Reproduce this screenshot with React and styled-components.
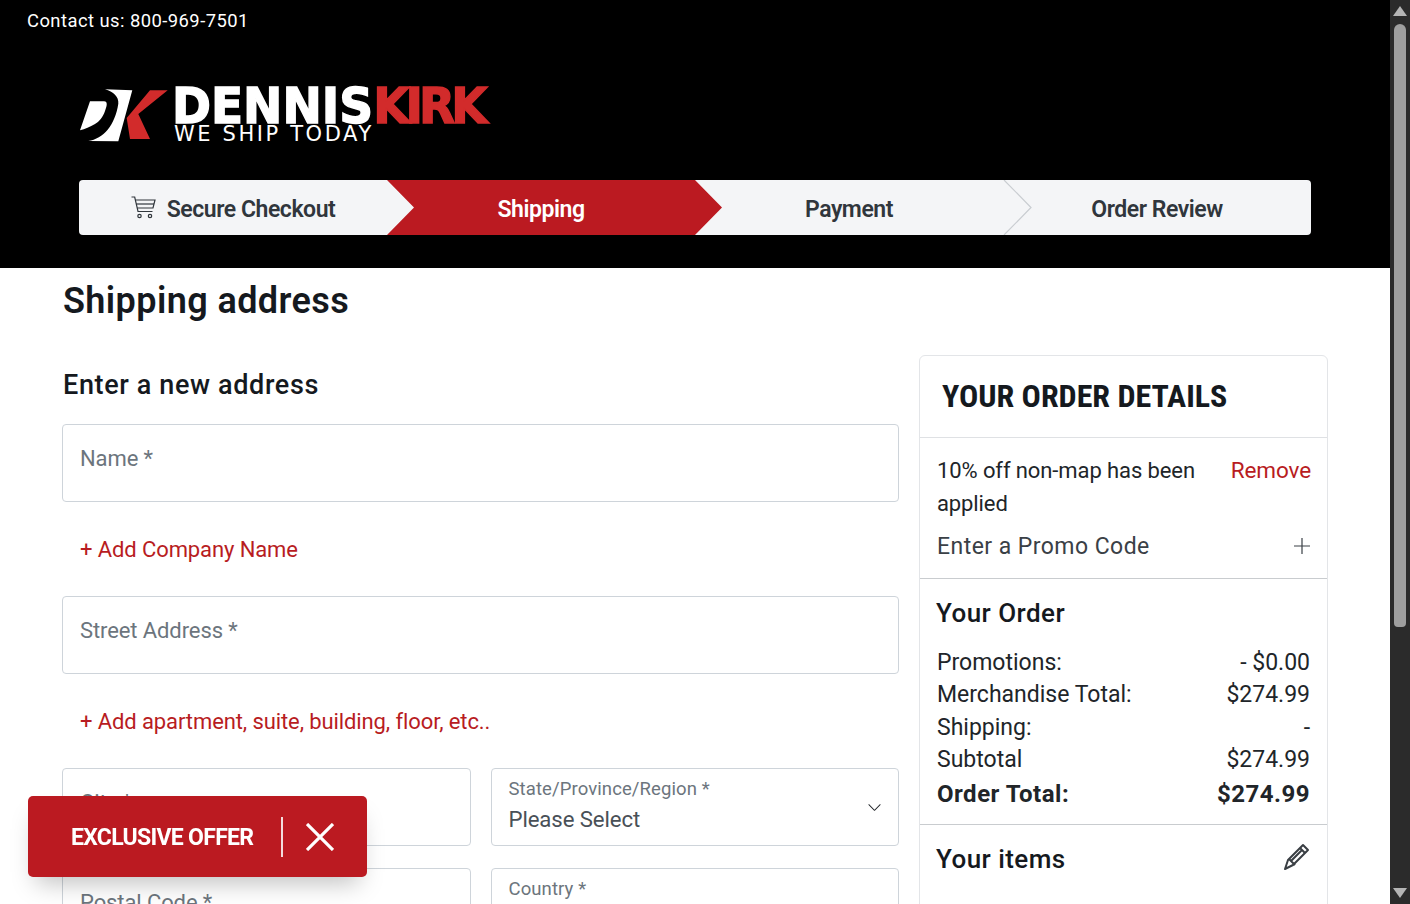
import React from 'react';
import styled, { createGlobalStyle } from 'styled-components';
import { BsChevronDown } from 'react-icons/bs';

const GlobalStyle = createGlobalStyle`
  html, body {
    margin: 0;
    height: 100%;
    overflow: hidden;
    background: #fff;
    font-family: Roboto, "Liberation Sans", sans-serif;
  }
`;

const Shell = styled.div`
  display: flex;
  height: 904px;
  overflow: hidden;
`;

const Page = styled.div`
  width: 1390px;
  flex: none;
`;

const Rail = styled.div`
  width: 20px;
  height: 904px;
  background: #2b2b2b;
  display: flex;
  flex-direction: column;
  align-items: center;
  justify-content: space-between;
  padding: 6px 0;
  box-sizing: border-box;
`;

const RailArrow = styled.div`
  width: 0;
  height: 0;
  border-left: 7px solid transparent;
  border-right: 7px solid transparent;
  ${(p) => (p.$down ? 'border-top: 10px solid #b4b4b4;' : 'border-bottom: 10px solid #b4b4b4;')}
`;

const RailThumb = styled.div`
  width: 12px;
  height: 603px;
  margin-top: 8px;
  margin-bottom: auto;
  background: #9f9f9f;
  border-radius: 6px 6px 4px 4px;
`;

const Header = styled.header`
  background: #000;
  height: 268px;
  padding-top: 9px;
  box-sizing: border-box;
`;

const Contact = styled.div`
  color: #fff;
  font-size: 18.4px;
  letter-spacing: 0.45px;
  line-height: 24px;
  padding-left: 27px;
`;

const LogoRow = styled.div`
  display: flex;
  align-items: flex-start;
  margin: 55px 0 0 79px;
  height: 92px;
`;

const LogoWords = styled.div`
  margin-left: 3px;
  width: 320px;
`;

const LogoName = styled.div`
  display: flex;
  font-family: "DejaVu Sans", Roboto, sans-serif;
  font-weight: 700;
  font-size: 47px;
  line-height: 36px;
  height: 36px;
  transform: scaleY(1.06);
  -webkit-text-stroke: 1.4px currentColor;
`;

const LogoPart = styled.span`
  color: ${(p) => p.$color};
  letter-spacing: ${(p) => p.$spacing}px;
`;

const LogoTag = styled.div`
  color: #fff;
  font-family: "DejaVu Sans", Roboto, sans-serif;
  font-size: 21px;
  line-height: 18px;
  letter-spacing: 2.6px;
  margin: 1px 0 0 2px;
  white-space: nowrap;
`;

const Steps = styled.nav`
  display: grid;
  grid-template-columns: repeat(4, 308px);
  width: 1232px;
  height: 55px;
  margin-left: 79px;
  background: #f4f5f7;
  border-radius: 4px;
`;

const Step = styled.div`
  position: relative;
  display: flex;
  align-items: center;
  justify-content: center;
  gap: 11px;
  box-sizing: border-box;
  padding-top: 3px;
  font-size: 23px;
  font-weight: 600;
  letter-spacing: -0.45px;
  color: ${(p) => (p.$active ? '#fff' : '#30363c')};
  background: ${(p) => (p.$active ? '#bb1a21' : 'transparent')};
  clip-path: ${(p) =>
    p.$active
      ? 'polygon(0 0, 308px 0, 335px 50%, 308px 100%, 0 100%, 27px 50%)'
      : 'none'};
  ${(p) => (p.$active ? 'width: 335px; padding-right: 27px; z-index: 1;' : '')}
`;

const StepDivider = styled.svg`
  position: absolute;
  left: 0;
  top: 0;
`;

const CartGlyph = styled.svg`
  margin-top: -3px;
`;

const Main = styled.main`
  padding: 0 0 0 62px;
`;

const Title = styled.h1`
  margin: 0 0 0 1px;
  color: #15191e;
  font-size: 36px;
  font-weight: 600;
  letter-spacing: 0.4px;
  line-height: 66px;
  height: 87px;
`;

const Columns = styled.div`
  display: grid;
  grid-template-columns: 837px 409px;
  gap: 20px;
`;

const FormColumn = styled.section``;

const FormTitle = styled.h2`
  margin: 0 0 0 1px;
  color: #15191e;
  font-size: 27px;
  font-weight: 500;
  letter-spacing: 0.63px;
  line-height: 60px;
  height: 69px;
`;

const Field = styled.div`
  box-sizing: border-box;
  height: 78px;
  border: 1px solid #ced4da;
  border-radius: 4px;
  padding: 17px 17px;
  color: #6c757d;
  font-size: 22px;
  letter-spacing: -0.1px;
  line-height: 33px;
  background: #fff;
  position: relative;
`;

const SmallLabel = styled.div`
  font-size: 18.5px;
  letter-spacing: 0.1px;
  line-height: 24px;
  margin-top: -9px;
  color: #6c757d;
`;

const FieldValue = styled.div`
  color: #495057;
  font-size: 22.2px;
  line-height: 35px;
  margin-top: 1px;
`;

const FieldArrow = styled(BsChevronDown)`
  position: absolute;
  right: 16px;
  top: 31px;
  font-size: 15px;
  color: #212529;
`;

const AddLink = styled.div`
  color: #b81c22;
  font-size: 22px;
  letter-spacing: -0.1px;
  line-height: 33px;
  padding: 31px 18px 30px;
`;

const FieldGrid = styled.div`
  display: grid;
  grid-template-columns: 1fr 1fr;
  gap: 22px 20px;
`;

const Card = styled.aside`
  border: 1px solid #e3e5e8;
  border-radius: 6px;
  height: 700px;
`;

const CardHead = styled.div`
  height: 82px;
  box-sizing: border-box;
  padding: 20px 22px;
  border-bottom: 1px solid #dfe1e4;
  font-family: "Roboto Condensed", Roboto, sans-serif;
  font-stretch: condensed;
  font-size: 32px;
  line-height: 40px;
  font-weight: 700;
  color: #15191e;
`;

const Promo = styled.div`
  height: 141px;
  box-sizing: border-box;
  padding: 16px 16px 0 17px;
  border-bottom: 1px solid #c9cccf;
  font-size: 22px;
  letter-spacing: -0.1px;
  line-height: 33px;
  color: #212529;
`;

const PromoRow = styled.div`
  display: flex;
  justify-content: space-between;
  gap: 20px;
`;

const RemoveLink = styled.span`
  color: #b81c22;
  font-size: 22.5px;
`;

const PromoEntry = styled(PromoRow)`
  margin-top: 10px;
  color: #3a4046;
  align-items: center;
  font-size: 23px;
  letter-spacing: 0.45px;
`;

const PlusGlyph = styled.svg`
  margin-top: -2px;
`;

const Section = styled.div`
  padding: 16px 17px 0 16px;
  border-bottom: 1px solid ${(p) => (p.$plain ? 'transparent' : '#c9cccf')};
  height: ${(p) => p.$h}px;
  box-sizing: border-box;
`;

const SectionHead = styled.div`
  display: flex;
  justify-content: space-between;
  align-items: center;
  font-size: 26px;
  font-weight: 500;
  letter-spacing: 0.45px;
  line-height: 36px;
  color: #15191e;
`;

const PencilGlyph = styled.svg`
  margin-top: -4px;
`;

const Totals = styled.dl`
  margin: 16px 0 0 1px;
`;

const TotalRow = styled.div`
  display: flex;
  justify-content: space-between;
  font-size: ${(p) => (p.$strong ? '24px' : '23px')};
  font-weight: ${(p) => (p.$strong ? 700 : 400)};
  letter-spacing: ${(p) => (p.$strong ? '0.5px' : '0')};
  line-height: ${(p) => (p.$strong ? '34px' : '32.4px')};
  color: #212529;
`;

const TotalLabel = styled.dt``;
const TotalValue = styled.dd`
  margin: 0;
`;

const Offer = styled.div`
  position: fixed;
  left: 28px;
  top: 796px;
  width: 339px;
  height: 81px;
  box-sizing: border-box;
  background: #bb1a21;
  border-radius: 5px;
  box-shadow: 0 14px 24px -8px rgba(0, 0, 0, 0.25);
  display: flex;
  align-items: center;
  padding-left: 43px;
  color: #fff;
  z-index: 5;
`;

const OfferText = styled.span`
  font-size: 23px;
  font-weight: 700;
  letter-spacing: -0.7px;
  line-height: 30px;
  padding-top: 2px;
  width: 210px;
`;

const OfferRule = styled.span`
  width: 2px;
  height: 40px;
  background: #f4dcdd;
`;

const OfferClose = styled.svg`
  margin-left: 23px;
`;

const DkMark = () => (
  <svg width="90" height="54" viewBox="0 0 90 54">
    <path d="M26 1.3 L53.3 2.3 L39.3 53.3 L9.3 53 C24.3 50.7 36 37.3 39.3 15.7 C40 9 34.3 3.3 26 1.3Z" fill="#fff" />
    <path d="M11 13.3 H25 C29 13.3 28 18 26 23 C24 29 20 34 16 36 C11 39 6 41 1 42.3Z" fill="#fff" />
    <path d="M71 2.3 H88.7 L59.3 26 L71 51 H51 L47.7 30Z" fill="#d22b2b" />
  </svg>
);

const CartIcon = () => (
  <CartGlyph width="25" height="23" viewBox="0 0 25 23" fill="none" stroke="#30363c" strokeWidth="1.2">
    <path d="M0.5 1h3.2l3.3 14.5h14.5" />
    <path d="M4.4 4H24l-2 8H6.2" />
    <path d="M5.2 8H23" />
    <circle cx="8.5" cy="20" r="1.7" />
    <circle cx="19" cy="20" r="1.7" />
  </CartGlyph>
);

const PencilIcon = () => (
  <PencilGlyph width="28" height="30" viewBox="0 0 28 30" fill="none" stroke="#3a3f44" strokeWidth="2" strokeLinejoin="round">
    <path d="M21 3l5 5-15 15-8 4 3-9z" />
    <path d="M18 6l5 5M7 17l6 6M9 19L20 8" />
  </PencilGlyph>
);

const App = () => {
  return (
    <>
      <GlobalStyle />
      <Shell>
        <Page>
          <Header>
            <Contact>Contact us: 800-969-7501</Contact>
            <LogoRow>
              <DkMark />
              <LogoWords>
                <LogoName>
                  <LogoPart $color="#fff" $spacing={0}>DENNIS</LogoPart>
                  <LogoPart $color="#d22b2b" $spacing={-4}>KIRK</LogoPart>
                </LogoName>
                <LogoTag>WE SHIP TODAY</LogoTag>
              </LogoWords>
            </LogoRow>
            <Steps>
              <Step>
                <CartIcon />
                Secure Checkout
              </Step>
              <Step $active>Shipping</Step>
              <Step>Payment</Step>
              <Step>
                <StepDivider width="30" height="55" viewBox="0 0 30 55" fill="none" stroke="#c9cdd1" strokeWidth="1.2">
                  <path d="M1 0l27 27.5L1 55" />
                </StepDivider>
                Order Review
              </Step>
            </Steps>
          </Header>
          <Main>
            <Title>Shipping address</Title>
            <Columns>
              <FormColumn>
                <FormTitle>Enter a new address</FormTitle>
                <Field>Name *</Field>
                <AddLink>+ Add Company Name</AddLink>
                <Field>Street Address *</Field>
                <AddLink>+ Add apartment, suite, building, floor, etc..</AddLink>
                <FieldGrid>
                  <Field>City *</Field>
                  <Field>
                    <SmallLabel>State/Province/Region *</SmallLabel>
                    <FieldValue>Please Select</FieldValue>
                    <FieldArrow />
                  </Field>
                  <Field>Postal Code *</Field>
                  <Field>
                    <SmallLabel>Country *</SmallLabel>
                  </Field>
                </FieldGrid>
              </FormColumn>
              <Card>
                <CardHead>YOUR ORDER DETAILS</CardHead>
                <Promo>
                  <PromoRow>
                    <span>10% off non-map has been applied</span>
                    <RemoveLink>Remove</RemoveLink>
                  </PromoRow>
                  <PromoEntry>
                    <span>Enter a Promo Code</span>
                    <PlusGlyph width="18" height="18" viewBox="0 0 18 18" stroke="#3a4046" strokeWidth="1.2">
                      <path d="M9 1v16M1 9h16" />
                    </PlusGlyph>
                  </PromoEntry>
                </Promo>
                <Section $h={246}>
                  <SectionHead>Your Order</SectionHead>
                  <Totals>
                    <TotalRow>
                      <TotalLabel>Promotions:</TotalLabel>
                      <TotalValue>- $0.00</TotalValue>
                    </TotalRow>
                    <TotalRow>
                      <TotalLabel>Merchandise Total:</TotalLabel>
                      <TotalValue>$274.99</TotalValue>
                    </TotalRow>
                    <TotalRow>
                      <TotalLabel>Shipping:</TotalLabel>
                      <TotalValue>-</TotalValue>
                    </TotalRow>
                    <TotalRow>
                      <TotalLabel>Subtotal</TotalLabel>
                      <TotalValue>$274.99</TotalValue>
                    </TotalRow>
                    <TotalRow $strong>
                      <TotalLabel>Order Total:</TotalLabel>
                      <TotalValue>$274.99</TotalValue>
                    </TotalRow>
                  </Totals>
                </Section>
                <Section $h={80} $plain>
                  <SectionHead>
                    Your items
                    <PencilIcon />
                  </SectionHead>
                </Section>
              </Card>
            </Columns>
          </Main>
          <Offer>
            <OfferText>EXCLUSIVE OFFER</OfferText>
            <OfferRule />
            <OfferClose width="28" height="28" viewBox="0 0 28 28" stroke="#fff" strokeWidth="3.2">
              <path d="M1 1l26 26M27 1L1 27" />
            </OfferClose>
          </Offer>
        </Page>
        <Rail>
          <RailArrow />
          <RailThumb />
          <RailArrow $down />
        </Rail>
      </Shell>
    </>
  );
};

export default App;
